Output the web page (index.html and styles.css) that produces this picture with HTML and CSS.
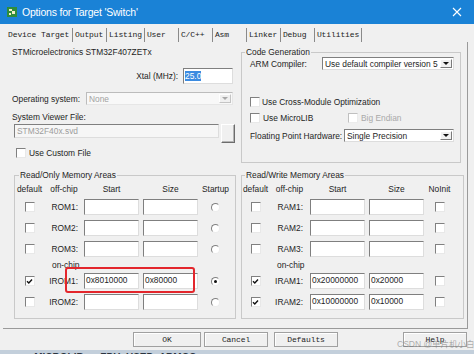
FILE: index.html
```html
<!DOCTYPE html>
<html>
  <head>
    <meta charset="UTF-8">
    <title>Options for Target 'Switch'</title>
    <link rel="stylesheet" href="styles.css">
  </head>
  <body>
    <div class="window">
      <!-- Title bar -->
      <div class="titlebar">
        <svg class="app-icon" width="10" height="10" viewBox="0 0 10 10">
          <rect width="10" height="10" fill="#2f8d3b"/>
          <path d="M2 2h3v2H2z M5 4h3v3H5z M2 6h2v2H2z" fill="#f3efc6"/>
        </svg>
        <span class="title">Options for Target 'Switch'</span>
        <svg class="close" width="10" height="10" viewBox="0 0 10 10">
          <path d="M1 1L9 9M9 1L1 9" stroke="#fff" stroke-width="1.1"/>
        </svg>
      </div>

      <!-- Tabs -->
      <div class="tabs">
        <span class="tab">Device</span>
        <span class="tab active">Target</span>
        <span class="tab sep">Output</span>
        <span class="tab sep">Listing</span>
        <span class="tab sep">User</span>
        <span class="tab sep">C/C++</span>
        <span class="tab sep">Asm</span>
        <span class="tab sep">Linker</span>
        <span class="tab sep">Debug</span>
        <span class="tab sep end">Utilities</span>
      </div>

      <!-- Target page -->
      <div class="panel">
        <div class="top">
          <div class="target-col">
            <div class="chip-name">STMicroelectronics STM32F407ZETx</div>
            <div class="xtal-row">
              <span>Xtal (MHz):</span>
              <span class="field xtal"><span class="selected">25.0</span></span>
            </div>
            <div class="os-row">
              <span>Operating system:</span>
              <span class="select disabled os"><span>None</span><span class="arrow"></span></span>
            </div>
            <div class="svf-label">System Viewer File:</div>
            <div class="svf-row">
              <span class="field disabled svf">STM32F40x.svd</span>
              <span class="browse"></span>
            </div>
            <div class="check-row custom">
              <span class="chk"></span><span>Use Custom File</span>
            </div>
          </div>

          <div class="group codegen">
            <div class="group-title">Code Generation</div>
            <div class="cg-row">
              <span>ARM Compiler:</span>
              <span class="select compiler"><span>Use default compiler version 5</span><span class="arrow"></span></span>
            </div>
            <div class="check-row cross">
              <span class="chk"></span><span>Use Cross-Module Optimization</span>
            </div>
            <div class="check-row micro">
              <span class="check-item microlib"><span class="chk"></span><span>Use MicroLIB</span></span>
              <span class="check-item disabled"><span class="chk"></span><span>Big Endian</span></span>
            </div>
            <div class="cg-row fph">
              <span>Floating Point Hardware:</span>
              <span class="select fpu"><span>Single Precision</span><span class="arrow"></span></span>
            </div>
          </div>
        </div>

        <div class="memory">
          <!-- Read only -->
          <div class="group rom">
            <div class="group-title">Read/Only Memory Areas</div>
            <div class="mem-grid">
              <span class="hd">default</span><span class="hd">off-chip</span><span class="hd">Start</span><span class="hd">Size</span><span class="hd last">Startup</span>

              <span class="cell"><span class="chk"></span></span><span class="name">ROM1:</span><span class="field"></span><span class="field"></span><span class="cell last"><span class="radio"></span></span>
              <span class="cell"><span class="chk"></span></span><span class="name">ROM2:</span><span class="field"></span><span class="field"></span><span class="cell last"><span class="radio"></span></span>
              <span class="cell"><span class="chk"></span></span><span class="name">ROM3:</span><span class="field"></span><span class="field"></span><span class="cell last"><span class="radio"></span></span>

              <span class="onchip">on-chip</span>

              <span class="cell"><span class="chk on"><svg width="7" height="7" viewBox="0 0 7 7"><path d="M1 3.2L2.8 5L6 1.5" fill="none" stroke="#111" stroke-width="1.4"/></svg></span></span><span class="name">IROM1:</span><span class="field">0x8010000</span><span class="field">0x80000</span><span class="cell last"><span class="radio on"></span></span>
              <span class="cell"><span class="chk"></span></span><span class="name">IROM2:</span><span class="field"></span><span class="field"></span><span class="cell last"><span class="radio"></span></span>
            </div>
          </div>

          <!-- Read write -->
          <div class="group ram">
            <div class="group-title">Read/Write Memory Areas</div>
            <div class="mem-grid">
              <span class="hd">default</span><span class="hd">off-chip</span><span class="hd">Start</span><span class="hd">Size</span><span class="hd last">NoInit</span>

              <span class="cell"><span class="chk"></span></span><span class="name">RAM1:</span><span class="field"></span><span class="field"></span><span class="cell last"><span class="chk"></span></span>
              <span class="cell"><span class="chk"></span></span><span class="name">RAM2:</span><span class="field"></span><span class="field"></span><span class="cell last"><span class="chk"></span></span>
              <span class="cell"><span class="chk"></span></span><span class="name">RAM3:</span><span class="field"></span><span class="field"></span><span class="cell last"><span class="chk"></span></span>

              <span class="onchip">on-chip</span>

              <span class="cell"><span class="chk on"><svg width="7" height="7" viewBox="0 0 7 7"><path d="M1 3.2L2.8 5L6 1.5" fill="none" stroke="#111" stroke-width="1.4"/></svg></span></span><span class="name">IRAM1:</span><span class="field">0x20000000</span><span class="field">0x20000</span><span class="cell last"><span class="chk"></span></span>
              <span class="cell"><span class="chk on"><svg width="7" height="7" viewBox="0 0 7 7"><path d="M1 3.2L2.8 5L6 1.5" fill="none" stroke="#111" stroke-width="1.4"/></svg></span></span><span class="name">IRAM2:</span><span class="field">0x10000000</span><span class="field">0x10000</span><span class="cell last"><span class="chk"></span></span>
            </div>
          </div>
        </div>

        <!-- red mark drawn over the IROM1 row -->
        <div class="annotation"></div>
      </div>

      <!-- Dialog buttons -->
      <div class="buttons">
        <span class="btn ok">OK</span>
        <span class="btn">Cancel</span>
        <span class="btn defaults">Defaults</span>
        <span class="btn help">Help<span class="watermark">CSDN @单片机小白</span></span>
      </div>
    </div>
    <div class="under">usr  __MICROLIB  __FPU_USED  ARMCC</div>
  </body>
</html>
```

FILE: styles.css
```css
* {
  box-sizing: border-box;
}

body {
  margin: 0;
  background: #c3cfdb;
  font-family: "Liberation Sans", Arial, sans-serif;
  font-size: 8.4px;
  color: #1e1e1e;
}

.window {
  width: 474px;
  height: 350px;
  background: #f0f0f0;
  display: flex;
  flex-direction: column;
}

/* title bar */
.titlebar {
  height: 24px;
  flex: none;
  display: flex;
  align-items: center;
  padding: 0 12px 0 7px;
  background: #1a82d6;
  color: #fff;
}

.app-icon {
  flex: none;
  margin-right: 5px;
}

.title {
  font-size: 10.5px;
  letter-spacing: -0.2px;
}

.close {
  margin-left: auto;
}

/* tabs */
.tabs {
  height: 18px;
  flex: none;
  display: flex;
  align-items: flex-start;
  padding: 4px 0 0 6px;
  font-family: "Liberation Mono", "Courier New", monospace;
  font-size: 8px;
  letter-spacing: -0.1px;
  color: #222;
}

.tab {
  height: 14px;
  line-height: 14px;
  min-width: 33px;
  padding: 0 2px;
}

.tab.sep {
  border-left: 1px solid #8a8a8a;
  min-width: 34px;
}

.tab.end {
  border-right: 1px solid #8a8a8a;
}

/* page */
.panel {
  position: relative;
  flex: none;
  width: 465px;
  height: 287px;
  margin-left: 3px;
  padding-left: 9px;
  border-right: 1px solid #9a9a9a;
  border-bottom: 1px solid #9a9a9a;
}

.top {
  display: flex;
  gap: 6px;
}

.target-col {
  width: 223px;
  display: flex;
  flex-direction: column;
}

.chip-name {
  margin-top: 4px;
  line-height: 12px;
}

.xtal-row {
  margin-top: 10px;
  height: 16px;
  display: flex;
  align-items: center;
  justify-content: flex-end;
  gap: 5px;
  padding-right: 2px;
}

.os-row {
  margin-top: 8px;
  height: 13px;
  display: flex;
  align-items: center;
}

.svf-label {
  margin-top: 6px;
  line-height: 12px;
}

.svf-row {
  margin-top: 1px;
  display: flex;
  align-items: flex-start;
  gap: 2px;
  padding-left: 2px;
}

.check-row {
  height: 10px;
  display: flex;
  align-items: center;
  gap: 3px;
}

.check-row.custom {
  margin-top: 5px;
  padding-left: 4px;
}

.check-item {
  display: flex;
  align-items: center;
  gap: 3px;
}

.check-item.microlib {
  width: 95px;
}

.check-item.disabled {
  color: #a9a9a9;
}

/* controls */
.field {
  display: block;
  height: 16px;
  background: #fff;
  border: 1px solid;
  border-color: #7f7f7f #dddddd #dddddd #7f7f7f;
  padding: 1px 0 0 1px;
  line-height: 10px;
  white-space: nowrap;
  overflow: hidden;
}

.field.xtal {
  width: 50px;
  padding-top: 2px;
}

.selected {
  background: #3b8be0;
  color: #fff;
}

.field.disabled {
  background: #f6f6f6;
  color: #9c9c9c;
  padding-left: 2px;
}

.field.svf {
  width: 205px;
  height: 14px;
}

.browse {
  width: 14px;
  height: 19px;
  background: #f0f0f0;
  border: 1px solid;
  border-color: #fff #6c6c6c #6c6c6c #fff;
  box-shadow: inset -1px -1px 0 #b4b4b4;
}

.select {
  display: flex;
  align-items: center;
  height: 13px;
  background: #fff;
  border: 1px solid;
  border-color: #7f7f7f #dddddd #dddddd #7f7f7f;
  padding-left: 2px;
  white-space: nowrap;
}

.select.disabled {
  background: #f8f8f8;
  color: #a2a2a2;
  border-color: #bcbcbc #e6e6e6 #e6e6e6 #bcbcbc;
}

.arrow {
  margin-left: auto;
  margin-right: 1px;
  width: 12px;
  height: 9px;
  display: flex;
  align-items: center;
  justify-content: center;
  background: #f0f0f0;
  border: 1px solid;
  border-color: #fff #7a7a7a #7a7a7a #fff;
}

.arrow::before {
  content: "";
  border-left: 3px solid transparent;
  border-right: 3px solid transparent;
  border-top: 3px solid #111;
}

.select.disabled .arrow {
  border-color: #fff #c4c4c4 #c4c4c4 #fff;
}

.select.disabled .arrow::before {
  border-top-color: #a8a8a8;
}

.select.os {
  margin-left: auto;
  margin-right: 2px;
  width: 147px;
}

.chk {
  width: 10px;
  height: 10px;
  flex: none;
  display: inline-flex;
  align-items: center;
  justify-content: center;
  background: #fff;
  border: 1px solid;
  border-color: #808080 #e8e8e8 #e8e8e8 #808080;
}

.check-item.disabled .chk {
  border-color: #c0c0c0 #ececec #ececec #c0c0c0;
}

.radio {
  width: 9px;
  height: 9px;
  display: inline-flex;
  align-items: center;
  justify-content: center;
  border-radius: 50%;
  background: #fff;
  border: 1px solid;
  border-color: #808080 #ececec #ececec #808080;
}

.radio.on::after {
  content: "";
  width: 3px;
  height: 3px;
  border-radius: 50%;
  background: #111;
}

/* group boxes */
.group {
  border: 1px solid #c9c9c9;
}

.group-title {
  width: fit-content;
  margin-top: -6px;
  padding: 0 1px;
  line-height: 10px;
  background: #f0f0f0;
}

.codegen {
  width: 220px;
  margin-top: 10px;
  padding: 0 6px 20px 8px;
}

.codegen .group-title {
  margin-left: -5px;
}

.cg-row {
  height: 13px;
  display: flex;
  align-items: center;
}

.select.compiler {
  margin-left: auto;
  width: 132px;
}

.check-row.cross {
  margin-top: 27px;
  gap: 2px;
}

.check-row.micro {
  margin-top: 6px;
}

.cg-row.fph {
  margin-top: 6px;
}

.select.fpu {
  margin-left: auto;
  width: 110px;
}

/* memory areas */
.memory {
  display: flex;
  gap: 5px;
  margin-top: 12px;
  padding-left: 2px;
}

.rom {
  width: 222px;
  padding-bottom: 8px;
}

.ram {
  width: 223px;
  padding-bottom: 8px;
}

.rom .group-title {
  margin-left: 4px;
}

.ram .group-title {
  margin-left: 3px;
}

.mem-grid {
  display: grid;
  margin-top: 4px;
  column-gap: 4px;
  row-gap: 5px;
  grid-template-rows: 10px 16px 16px 16px 6px 16px 16px;
  align-items: center;
}

.rom .mem-grid {
  grid-template-columns: 29px 32px 55px 55px 1fr;
}

.ram .mem-grid {
  grid-template-columns: 27px 33px 55px 55px 1fr;
}

.hd {
  text-align: center;
  line-height: 10px;
  white-space: nowrap;
}

.cell {
  display: flex;
  justify-content: center;
  align-items: center;
}

.name {
  text-align: right;
  padding-right: 2px;
}

.ram .name {
  padding-right: 3px;
}

.rom .last {
  padding-right: 9px;
}

.ram .last {
  padding-right: 12px;
}

.onchip {
  grid-column: 2 / -1;
  line-height: 6px;
  padding-left: 4px;
}

.annotation {
  position: absolute;
  left: 62px;
  top: 225px;
  width: 130px;
  height: 26px;
  border: 2px solid #e3262c;
  border-radius: 3px;
}

/* buttons */
.buttons {
  display: flex;
  height: 15px;
  margin-top: 3px;
  padding: 0 7px 0 133px;
  gap: 3px;
  font-family: "Liberation Mono", "Courier New", monospace;
  font-size: 8px;
  letter-spacing: -0.1px;
}

.btn {
  width: 64px;
  height: 15px;
  display: flex;
  align-items: center;
  justify-content: center;
  background: #f0f0f0;
  border: 1px solid #a0a0a0;
  box-shadow: inset 1px 1px 0 #fff;
}

.btn.ok {
  width: 68px;
}

.btn.defaults {
  margin-left: 3px;
}

.btn.help {
  position: relative;
  margin-left: auto;
}

.watermark {
  position: absolute;
  left: -7px;
  top: 4px;
  font-family: "Liberation Sans", "Noto Sans CJK SC", sans-serif;
  font-size: 8.5px;
  letter-spacing: 0;
  white-space: nowrap;
  color: rgba(110, 110, 110, 0.55);
}

.under {
  height: 4px;
  overflow: hidden;
  padding: 2px 0 0 2px;
  font-size: 10px;
  font-weight: bold;
  line-height: 12px;
  color: #2a3440;
  white-space: pre;
}
```
